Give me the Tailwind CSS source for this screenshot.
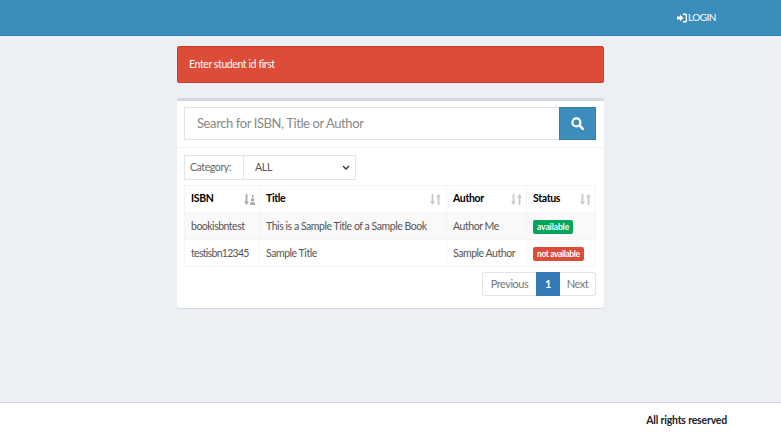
<!DOCTYPE html>
<html lang="en">
<head>
  <meta charset="UTF-8" />
  <title>Library</title>
  <script src="https://cdn.jsdelivr.net/npm/@tailwindcss/browser@4"></script>
</head>
<body class="h-[439px] w-[781px] overflow-hidden flex flex-col bg-[#ecf0f5] font-['Lato','Noto_Sans',sans-serif] text-[12px] text-[#333]">

  <!-- top bar -->
  <header class="h-[36px] shrink-0 bg-[#3c8dbc] border-b border-[#2a84b5] flex items-center justify-end pr-[65px] text-white text-[10px] tracking-[-0.5px]">
    <a href="#" class="flex items-center gap-[1px]">
      <svg class="w-[10px] h-[10px]" viewBox="0 0 22 20" fill="#fff" preserveAspectRatio="none">
        <path d="M0 7h7V3l7 7-7 7v-4H0z" />
        <path d="M13 1h6a3 3 0 0 1 3 3v12a3 3 0 0 1-3 3h-6v-3h5a1 1 0 0 0 1-1V5a1 1 0 0 0-1-1h-5z" />
      </svg>
      LOGIN
    </a>
  </header>

  <main class="flex-1 w-[427px] ml-[177px] pt-[10px]">
    <div class="h-[37px] bg-[#dd4b39] border border-[#d73925] rounded-[2px] flex items-center px-[11px] pt-[1px] text-white text-[10.500px] tracking-[-0.4px]">Enter student id first</div>

    <section class="mt-[15px] h-[210px] bg-white border-t-[3px] border-[#d2d6de] rounded-[3px] shadow-[0_1px_1px_rgba(0,0,0,0.1)]">
      <div class="pl-[7px] pr-[8px] pt-[6px] pb-[7px] border-b border-[#f4f4f4]">
        <div class="flex h-[33px]">
          <input type="text" placeholder="Search for ISBN, Title or Author" class="flex-1 min-w-0 px-[12px] border border-[#e0e3e8] border-r-0 text-[13px] tracking-[-0.4px] placeholder:text-[#888] outline-none" />
          <button class="w-[37px] bg-[#3c8dbc] border border-[#367fa9] flex items-center justify-center">
            <svg class="w-[13px] h-[13px]" viewBox="0 0 14 14" fill="none" stroke="#fff">
              <circle cx="5.800" cy="5.800" r="4.300" stroke-width="2.400" />
              <path d="M9 9l4 4" stroke-width="2.800" stroke-linecap="round" />
            </svg>
          </button>
        </div>
      </div>

      <div class="pl-[7px] pr-[8px] pt-[7px]">
        <div class="flex h-[25px] w-[172px] border border-[#e0e3e8] text-[10.500px] tracking-[-0.3px]">
          <span class="w-[59px] flex items-center pl-[5px] border-r border-[#e0e3e8] text-[#666] tracking-[-0.4px]">Category:</span>
          <span class="flex-1 flex items-center justify-between pl-[11px] pr-[5px] text-[#555]">
            ALL
            <svg class="w-[8px] h-[6px]" viewBox="0 0 8 6" fill="none" stroke="#333" stroke-width="1.400"><path d="M1 1l3 3 3-3" /></svg>
          </span>
        </div>

        <table class="mt-[5px] w-[412px] table-fixed border-collapse text-[10.500px] tracking-[-0.45px] text-[#555] whitespace-nowrap">
          <colgroup>
            <col class="w-[75px]" />
            <col class="w-[187px]" />
            <col class="w-[80px]" />
            <col />
          </colgroup>
          <thead class="text-black font-bold">
            <tr class="h-[27px] tracking-[-0.35px]">
              <th class="border border-[#f4f4f4] px-[6px] text-left">
                <div class="flex items-center justify-between">ISBN
                  <svg class="w-[11px] h-[11px] -mr-[2px]" viewBox="0 0 11 11" fill="#aaa"><path d="M1.600 0h1.800v7.500H5L2.500 11 0 7.500h1.600z" /><path d="M6.200 8.300H11V11H6.200zM7 4.500h3.200v2.700H7zM7.800 1h1.700v2.500H7.800z" /></svg>
                </div>
              </th>
              <th class="border border-[#f4f4f4] px-[6px] text-left">
                <div class="flex items-center justify-between">Title
                  <svg class="w-[11px] h-[11px] -mr-[1px]" viewBox="0 0 11 11" fill="#c8c8c8"><path d="M1.600 0h1.800v7.500H5L2.500 11 0 7.500h1.600zM7.600 11h1.800V3.500H11L8.500 0 6 3.500h1.600z" /></svg>
                </div>
              </th>
              <th class="border border-[#f4f4f4] px-[6px] text-left">
                <div class="flex items-center justify-between">Author
                  <svg class="w-[11px] h-[11px] -mr-[2px]" viewBox="0 0 11 11" fill="#c8c8c8"><path d="M1.600 0h1.800v7.500H5L2.500 11 0 7.500h1.600zM7.600 11h1.800V3.500H11L8.500 0 6 3.500h1.600z" /></svg>
                </div>
              </th>
              <th class="border border-[#f4f4f4] px-[6px] text-left">
                <div class="flex items-center justify-between">Status
                  <svg class="w-[11px] h-[11px] -mr-[2px]" viewBox="0 0 11 11" fill="#c8c8c8"><path d="M1.600 0h1.800v7.500H5L2.500 11 0 7.500h1.600zM7.600 11h1.800V3.500H11L8.500 0 6 3.500h1.600z" /></svg>
                </div>
              </th>
            </tr>
          </thead>
          <tbody>
            <tr class="h-[27px] bg-[#f9f9f9]">
              <td class="border border-[#f4f4f4] px-[6px] pt-[1px] tracking-[-0.5px]">bookisbntest</td>
              <td class="border border-[#f4f4f4] px-[6px] pt-[1px]">This is a Sample Title of a Sample Book</td>
              <td class="border border-[#f4f4f4] px-[6px] pt-[1px]">Author Me</td>
              <td class="border border-[#f4f4f4] px-[6px] pt-[1px]"><span class="inline-block px-[4px] h-[14px] leading-[14px] rounded-[2px] bg-[#00a65a] text-white text-[8.500px] tracking-[-0.1px] font-bold">available</span></td>
            </tr>
            <tr class="h-[27px]">
              <td class="border border-[#f4f4f4] px-[6px] pt-[1px] tracking-[-0.7px]">testisbn12345</td>
              <td class="border border-[#f4f4f4] px-[6px] pt-[1px]">Sample Title</td>
              <td class="border border-[#f4f4f4] px-[6px] pt-[1px]">Sample Author</td>
              <td class="border border-[#f4f4f4] px-[6px] pt-[1px]"><span class="inline-block px-[4px] h-[14px] leading-[14px] rounded-[2px] bg-[#dd4b39] text-white text-[8.500px] tracking-[-0.4px] font-bold">not available</span></td>
            </tr>
          </tbody>
        </table>

        <nav class="mt-[5px] flex justify-end text-[11px] tracking-[-0.5px] text-[#777]">
          <a href="#" class="w-[54px] h-[24px] flex items-center justify-center border border-[#e3e3e3] border-r-0 rounded-l-[3px]">Previous</a>
          <a href="#" class="w-[24px] h-[24px] flex items-center justify-center bg-[#337ab7] border border-[#337ab7] text-white font-bold">1</a>
          <a href="#" class="w-[36px] h-[24px] flex items-center justify-center border border-[#e3e3e3] border-l-0 rounded-r-[3px]">Next</a>
        </nav>
      </div>
    </section>
  </main>

  <footer class="h-[37px] shrink-0 bg-white border-t border-[#d2d6de] flex items-center justify-end pr-[54px] text-[10.500px] tracking-[-0.2px] font-bold text-[#222]">All rights reserved</footer>

</body>
</html>
